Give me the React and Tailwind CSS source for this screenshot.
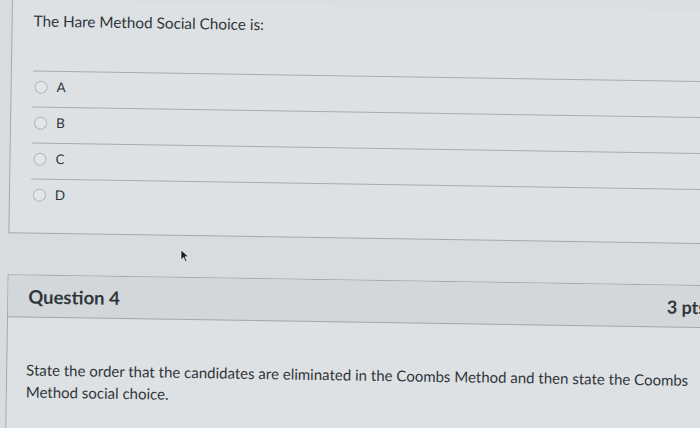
import React from "react";

const answers = ["A", "B", "C", "D"];

// the photo is tilted a little, so the page is rotated to match it
const App = () => {
  return (
    <div className="relative w-[700px] h-[428px] overflow-hidden bg-[#dcdfe1] font-['Lato',sans-serif] text-[#30363b]">
      <div className="origin-top-left rotate-[0.9deg] w-[760px] h-[460px] bg-[#d9dcde]">
        {/* previous question */}
        <div className="ml-[12px] w-[740px] h-[233px] border-l border-b border-[#a3a8ac] bg-[#dee1e3] pl-[21px] pt-[8px]">
          <p className="text-[15.3px] leading-[24px]">The Hare Method Social Choice is:</p>
          <div className="mt-[38px]">
            {answers.map((a) => (
              <div
                key={a}
                className="h-[36px] border-t border-[#a6abaf] pt-[9px] pl-[2px] flex items-start"
              >
                <div className="flex items-center gap-[9px]">
                  <span className="w-[13px] h-[13px] rounded-full border border-[#b3b8bc] bg-[#e3e6e8]" />
                  <span className="text-[13.5px] leading-[13px]">{a}</span>
                </div>
              </div>
            ))}
          </div>
        </div>

        {/* question 4 */}
        <div className="mt-[41px] ml-[12px] w-[740px] border border-[#a3a8ac] bg-[#dee1e3]">
          <div className="h-[42px] border-b border-[#a3a8ac] bg-[#d3d7da] flex items-center justify-between pl-[20px] pr-[40px]">
            <h3 className="text-[18.5px] font-bold leading-[22px]">Question 4</h3>
            <span className="text-[18px] font-bold leading-[22px]">3 pts</span>
          </div>
          <div className="pl-[19px] pt-[42px] pb-[40px]">
            <p className="w-[690px] text-[15px] leading-[21.5px]">
              State the order that the candidates are eliminated in the Coombs Method and then state the Coombs
              Method social choice.
            </p>
          </div>
        </div>

        {/* mouse pointer */}
        <svg className="absolute left-[184px] top-[246px]" width="9" height="13" viewBox="0 0 9 13">
          <path d="M1 1 L1 11 L3.5 8.5 L5.5 12.5 L7 11.8 L5 7.8 L8.5 7.8 Z" fill="#1c1f22" stroke="#ffffff" strokeWidth="0.6" />
        </svg>
      </div>
    </div>
  );
};

export default App;
